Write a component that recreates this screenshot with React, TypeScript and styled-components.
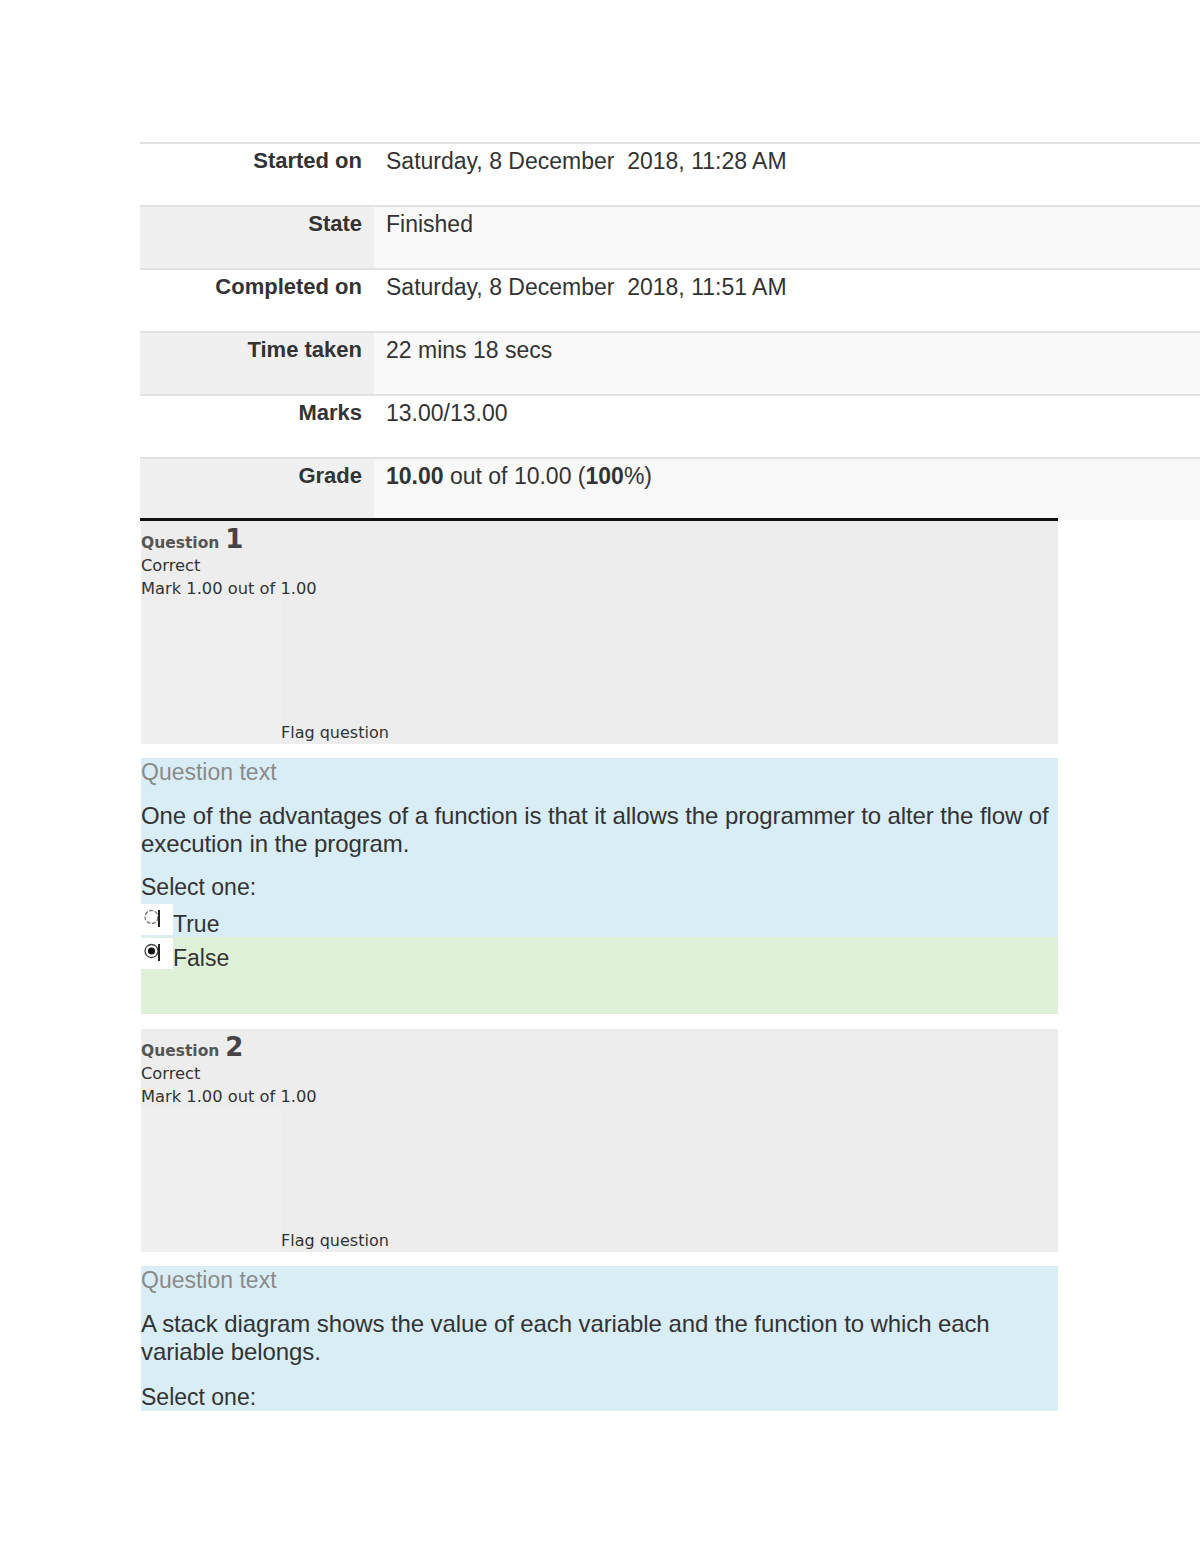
import React from "react";
import styled, { createGlobalStyle } from "styled-components";

const Global = createGlobalStyle`
  html, body { margin: 0; padding: 0; background: #ffffff; }
  body { font-family: "Liberation Sans", Arial, sans-serif; color: #333; }
`;

const Page = styled.div`
  width: 1200px;
  min-height: 1553px;
  padding: 142px 0 0 140px;
  box-sizing: border-box;
`;

const Summary = styled.div`
  width: 1060px;
  display: flex;
  flex-direction: column;
`;

const SummaryRow = styled.div<{ $shaded?: boolean }>`
  display: grid;
  grid-template-columns: 234px 1fr;
  height: 63px;
  box-sizing: border-box;
  border-top: 2px solid #e2e2e2;
  background: ${(p) => (p.$shaded ? "#f9f9f9" : "#ffffff")};
`;

const SummaryLabel = styled.div<{ $shaded?: boolean }>`
  background: ${(p) => (p.$shaded ? "#f0f0f0" : "#ffffff")};
  text-align: right;
  padding: 3px 12px 0 0;
  font-size: 22px;
  line-height: 28px;
  font-weight: bold;
  color: #333;
`;

const SummaryValue = styled.div`
  padding: 3px 0 0 12px;
  font-size: 23px;
  line-height: 28px;
  color: #333;
  white-space: pre;
  b { font-weight: bold; }
`;

const Divider = styled.div`
  position: relative;
  z-index: 1;
  width: 918px;
  height: 3px;
  background: #111;
  margin-top: -2px;
`;

const Info = styled.div<{ $top: number }>`
  width: 917px;
  height: 223px;
  margin: ${(p) => p.$top}px 0 0 1px;
  background: #ededed;
  display: flex;
  flex-direction: column;
  font-family: "DejaVu Sans", Verdana, sans-serif;
  color: #333;
`;

const InfoHead = styled.div`
  padding-top: 5px;
`;

const Heading = styled.div`
  font-size: 15.5px;
  font-weight: bold;
  color: #555;
  line-height: 26px;
  height: 28px;
  span {
    font-size: 26px;
    color: #444;
    margin-left: 6px;
  }
`;

const InfoLine = styled.div`
  font-size: 16.3px;
  line-height: 23px;
  color: #333;
`;

const InfoBody = styled.div`
  flex: 1;
  display: flex;
`;

const InfoSide = styled.div`
  width: 140px;
  background: #f0f0f0;
`;

const InfoMain = styled.div`
  flex: 1;
  display: flex;
  align-items: flex-end;
  font-size: 16px;
  line-height: 22px;
  color: #333;
`;

const QBlock = styled.div`
  width: 917px;
  margin: 14px 0 0 1px;
  background: #d9edf7;
  color: #333;
`;

const QLabel = styled.div`
  font-size: 23px;
  line-height: 28px;
  color: #8a8a8a;
`;

const Prompt = styled.p`
  margin: 16px 0 0 0;
  font-size: 24px;
  line-height: 28px;
  letter-spacing: -0.1px;
`;

const SelectOne = styled.div<{ $last?: boolean }>`
  margin-top: ${(p) => (p.$last ? "17px" : "15px")};
  font-size: 23px;
  line-height: 28px;
  padding-bottom: ${(p) => (p.$last ? "0" : "3px")};
`;

const Answer = styled.div<{ $correct?: boolean; $tall?: boolean }>`
  display: flex;
  align-items: flex-start;
  background: ${(p) => (p.$correct ? "#dff0d8" : "transparent")};
  height: ${(p) => (p.$tall ? "77px" : "33px")};
  padding-top: ${(p) => (p.$correct ? "1px" : "0")};
  box-sizing: border-box;
`;

const RadioBox = styled.div`
  width: 32px;
  height: 31px;
  background: #ffffff;
  flex-shrink: 0;
  svg { display: block; }
`;

const AnswerText = styled.div`
  font-size: 23px;
  line-height: 28px;
  padding-top: 6px;
`;

const Radio: React.FC<{ checked?: boolean }> = ({ checked }) => {
  const id = checked ? "radio-clip-on" : "radio-clip-off";
  return (
    <RadioBox>
      <svg width="32" height="31" viewBox="0 0 32 31">
        <defs>
          <clipPath id={id}>
            <rect x="0" y="0" width="17" height="31" />
          </clipPath>
        </defs>
        <g clipPath={`url(#${id})`}>
          <circle
            cx="10.5"
            cy="13"
            r="6.5"
            fill="#fff"
            stroke={checked ? "#444" : "#777"}
            strokeWidth="1.3"
            strokeDasharray={checked ? undefined : "4 1.5"}
          />
          {checked && <circle cx="10.5" cy="13" r="3.6" fill="#111" />}
        </g>
        <rect x="17" y="6" width="2" height="17" fill="#222" />
      </svg>
    </RadioBox>
  );
};

const rows: { label: string; value: React.ReactNode }[] = [
  { label: "Started on", value: "Saturday, 8 December  2018, 11:28 AM" },
  { label: "State", value: "Finished" },
  { label: "Completed on", value: "Saturday, 8 December  2018, 11:51 AM" },
  { label: "Time taken", value: "22 mins 18 secs" },
  { label: "Marks", value: "13.00/13.00" },
  {
    label: "Grade",
    value: (
      <>
        <b>10.00</b> out of 10.00 (<b>100</b>%)
      </>
    ),
  },
];

const QuestionInfo: React.FC<{ n: number; top: number }> = ({ n, top }) => (
  <Info $top={top}>
    <InfoHead>
      <Heading>
        Question<span>{n}</span>
      </Heading>
      <InfoLine>Correct</InfoLine>
      <InfoLine>Mark 1.00 out of 1.00</InfoLine>
    </InfoHead>
    <InfoBody>
      <InfoSide />
      <InfoMain>Flag question</InfoMain>
    </InfoBody>
  </Info>
);

export default function App() {
  return (
    <Page>
      <Global />
      <Summary>
        {rows.map((r, i) => (
          <SummaryRow key={r.label} $shaded={i % 2 === 1}>
            <SummaryLabel $shaded={i % 2 === 1}>{r.label}</SummaryLabel>
            <SummaryValue>{r.value}</SummaryValue>
          </SummaryRow>
        ))}
      </Summary>
      <Divider />
      <QuestionInfo n={1} top={0} />
      <QBlock>
        <QLabel>Question text</QLabel>
        <Prompt>
          One of the advantages of a function is that it allows the programmer to alter the flow of execution in the program.
        </Prompt>
        <SelectOne>Select one:</SelectOne>
        <Answer>
          <Radio />
          <AnswerText>True</AnswerText>
        </Answer>
        <Answer $correct $tall>
          <Radio checked />
          <AnswerText>False</AnswerText>
        </Answer>
      </QBlock>
      <QuestionInfo n={2} top={15} />
      <QBlock>
        <QLabel>Question text</QLabel>
        <Prompt>
          A stack diagram shows the value of each variable and the function to which each variable belongs.
        </Prompt>
        <SelectOne $last>Select one:</SelectOne>
      </QBlock>
    </Page>
  );
}
